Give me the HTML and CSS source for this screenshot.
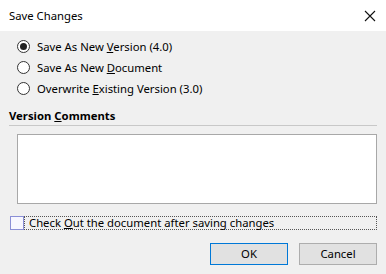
FILE: index.html
```html
<!DOCTYPE html>
<html>
<head>
<meta charset="utf-8">
<link rel="stylesheet" href="styles.css">
</head>
<body>
<div class="dialog">
  <div class="titlebar">
    <span class="title">Save Changes</span>
    <svg class="close" width="12" height="12" viewBox="0 0 12 12"><path d="M1 1L11 11M11 1L1 11" stroke="#111" stroke-width="1.1" fill="none"/></svg>
  </div>
  <div class="content">
    <div class="radios">
      <label class="radio-row"><span class="radio checked"></span><span>Save As New <u>V</u>ersion (4.0)</span></label>
      <label class="radio-row"><span class="radio"></span><span>Save As New <u>D</u>ocument</span></label>
      <label class="radio-row"><span class="radio"></span><span>Overwrite <u>E</u>xisting Version (3.0)</span></label>
    </div>
    <div class="section-head">Version <u>C</u>omments</div>
    <div class="textarea"></div>
    <div class="check-row">
      <span class="checkbox"></span>
      <span class="check-label">Check <u>O</u>ut the document after saving changes</span>
    </div>
    <div class="buttons">
      <div class="btn default">OK</div>
      <div class="btn">Cancel</div>
    </div>
  </div>
</div>
</body>
</html>
```
FILE: styles.css
```css
* { box-sizing: border-box; }
html, body { margin: 0; padding: 0; }
body {
  width: 386px;
  height: 274px;
  overflow: hidden;
  font-family: "Noto Sans", "Open Sans", sans-serif;
  font-size: 11.3px;
  color: #000;
  background: #f0f0f0;
}
.dialog {
  width: 386px;
  height: 274px;
  display: flex;
  flex-direction: column;
}
.titlebar {
  height: 31px;
  background: #fff;
  display: flex;
  align-items: center;
  justify-content: space-between;
  padding: 0 9px 0 9px;
}
.title { line-height: 16px; }
.close { margin-right: 1px; }
.content {
  padding: 5px 9px 0 9px;
  display: flex;
  flex-direction: column;
}
.radios {
  padding-left: 8px;
  display: flex;
  flex-direction: column;
}
.radio-row {
  height: 21px;
  display: flex;
  align-items: center;
  gap: 7px;
  line-height: 16px;
}
.radio {
  width: 13px;
  height: 13px;
  border: 1px solid #333;
  border-radius: 50%;
  background: #fff;
  display: flex;
  align-items: center;
  justify-content: center;
}
.radio.checked::after {
  content: "";
  width: 7px;
  height: 7px;
  border-radius: 50%;
  background: #222;
}
.section-head {
  margin-top: 8px;
  height: 19px;
  line-height: 18px;
  font-weight: bold;
  border-bottom: 1px solid #c8c8c8;
}
.textarea {
  margin: 8px 0 0 8px;
  height: 70px;
  background: #fff;
  border: 1px solid #a8a8a8;
}
.check-row {
  margin-top: 12px;
  height: 14px;
  display: flex;
  align-items: stretch;
  margin-left: 1px;
}
.checkbox {
  width: 14px;
  height: 14px;
  border: 1px solid #8a8fd6;
  background: #f7f7ff;
}
.check-label {
  flex: 1;
  border: 1px dotted #555;
  padding-left: 4px;
  line-height: 12px;
}
.buttons {
  margin-top: 13px;
  display: flex;
  justify-content: flex-end;
  gap: 11px;
}
.btn {
  width: 78px;
  height: 22px;
  border: 1px solid #adadad;
  background: #e1e1e1;
  display: flex;
  align-items: center;
  justify-content: center;
  line-height: 16px;
}
.btn.default { border-color: #0078d7; }
```
